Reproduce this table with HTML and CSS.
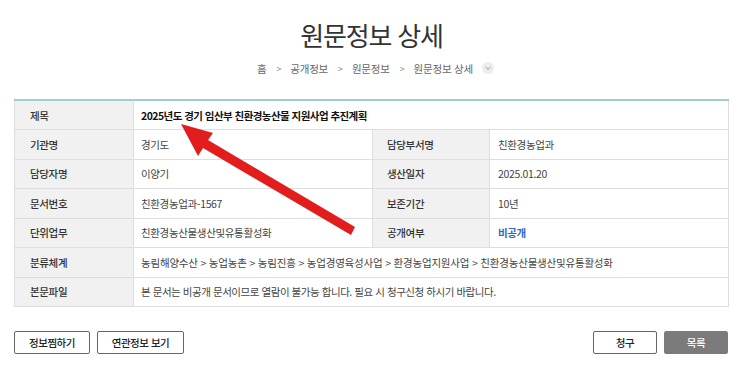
FILE: index.html
```html
<!DOCTYPE html>
<html lang="ko">
<head>
<meta charset="utf-8">
<title>원문정보 상세</title>
<link rel="stylesheet" href="styles.css">
</head>
<body>
<div class="page">
  <header class="head">
    <h1 class="title">원문정보 상세</h1>
    <nav class="crumbs">
      <span>홈</span><span class="sep">&gt;</span>
      <span>공개정보</span><span class="sep">&gt;</span>
      <span>원문정보</span><span class="sep">&gt;</span>
      <span>원문정보 상세</span>
      <span class="more">
        <svg width="12" height="12" viewBox="0 0 12 12"><path d="M3.6 5 L6 7.3 L8.4 5" fill="none" stroke="#9a9a9a" stroke-width="1"/></svg>
      </span>
    </nav>
  </header>

  <table class="detail">
    <colgroup>
      <col class="c-label"><col class="c-value"><col class="c-label2"><col class="c-value2">
    </colgroup>
    <tr>
      <th>제목</th>
      <td colspan="3" class="subject">2025년도 경기 임산부 친환경농산물 지원사업 추진계획</td>
    </tr>
    <tr>
      <th>기관명</th><td>경기도</td>
      <th class="th2">담당부서명</th><td class="td2">친환경농업과</td>
    </tr>
    <tr>
      <th>담당자명</th><td>이양기</td>
      <th class="th2">생산일자</th><td class="td2">2025.01.20</td>
    </tr>
    <tr>
      <th>문서번호</th><td>친환경농업과-1567</td>
      <th class="th2">보존기간</th><td class="td2">10년</td>
    </tr>
    <tr>
      <th>단위업무</th><td>친환경농산물생산및유통활성화</td>
      <th class="th2">공개여부</th><td class="td2 closed">비공개</td>
    </tr>
    <tr>
      <th>분류체계</th>
      <td colspan="3" class="path">농림해양수산 &gt; 농업농촌 &gt; 농림진흥 &gt; 농업경영육성사업 &gt; 환경농업지원사업 &gt; 친환경농산물생산및유통활성화</td>
    </tr>
    <tr>
      <th>본문파일</th>
      <td colspan="3" class="notice">본 문서는 비공개 문서이므로 열람이 불가능 합니다. 필요 시 청구신청 하시기 바랍니다.</td>
    </tr>
  </table>

  <div class="actions">
    <div class="group">
      <button class="btn w76">정보찜하기</button>
      <button class="btn w87">연관정보 보기</button>
    </div>
    <div class="group">
      <button class="btn w64">청구</button>
      <button class="btn w64 dark">목록</button>
    </div>
  </div>

  <svg class="pointer" width="743" height="385" viewBox="0 0 743 385">
    <polygon points="181,124 213,133 208,140 355,227 351,235 203,148 198,156" fill="#e21d1d"/>
  </svg>
</div>
</body>
</html>
```

FILE: styles.css
```css
* { box-sizing: border-box; }

body {
  margin: 0;
  background: #fff;
  font-family: "Noto Sans CJK KR", "Noto Sans", sans-serif;
  color: #333;
}

.page {
  position: relative;
  width: 743px;
  height: 385px;
  overflow: hidden;
}

.head {
  padding-top: 20px;
  text-align: center;
}

.title {
  margin: 0;
  font-size: 26px;
  line-height: 30px;
  font-weight: 400;
  letter-spacing: -1.2px;
  color: #333;
}

.crumbs {
  margin-top: 11px;
  display: flex;
  justify-content: center;
  align-items: center;
  height: 14px;
  font-size: 10.5px;
  letter-spacing: -0.2px;
  color: #666;
  padding-left: 8px;
}

.crumbs .sep {
  margin: 0 9px 0 10px;
  color: #888;
  font-size: 9px;
}

.crumbs .more {
  display: inline-flex;
  width: 12px;
  height: 12px;
  margin-left: 9px;
  border-radius: 50%;
  background: #ececec;
}

.detail {
  margin: 24px 0 0 14px;
  width: 714px;
  border-collapse: collapse;
  table-layout: fixed;
  border-top: 2px solid #a2ccd0;
  font-size: 10.5px;
  letter-spacing: -0.35px;
}

.c-label { width: 119px; }
.c-value { width: 239px; }
.c-label2 { width: 117px; }
.c-value2 { width: 239px; }

.detail th,
.detail td {
  height: 29.5px;
  border: 1px solid #dedede;
  border-top-color: #e2e2e2;
  padding: 0 0 0 7px;
  text-align: left;
  vertical-align: middle;
  white-space: nowrap;
}

.detail tr:first-child th,
.detail tr:first-child td { border-top: 0; }

.detail th {
  background: #f1f1f1;
  font-weight: 500;
  color: #333;
  padding-left: 15px;
}

.detail th.th2 { padding-left: 14px; }
.detail td.td2 { padding-left: 8px; }

.detail td {
  color: #444;
  background: #fff;
}

.detail td.subject {
  font-weight: 700;
  color: #111;
  letter-spacing: -0.55px;
}

.detail td.path { letter-spacing: -0.2px; }
.detail td.notice { letter-spacing: -0.45px; }

.detail td.closed {
  color: #2a6bc3;
  font-weight: 700;
}

.actions {
  margin: 24px 15px 0 14px;
  display: flex;
  justify-content: space-between;
}

.group {
  display: flex;
  gap: 7px;
}

.btn {
  height: 23px;
  padding: 0;
  border: 1px solid #666;
  border-radius: 2px;
  background: #fff;
  font-family: inherit;
  font-size: 10.5px;
  font-weight: 500;
  letter-spacing: -0.5px;
  color: #222;
}

.w76 { width: 76px; }
.w87 { width: 87px; }
.w64 { width: 64px; }

.btn.dark {
  background: #7b7b7b;
  border-color: #7b7b7b;
  color: #fff;
}

.pointer {
  position: absolute;
  left: 0;
  top: 0;
  pointer-events: none;
}
```
